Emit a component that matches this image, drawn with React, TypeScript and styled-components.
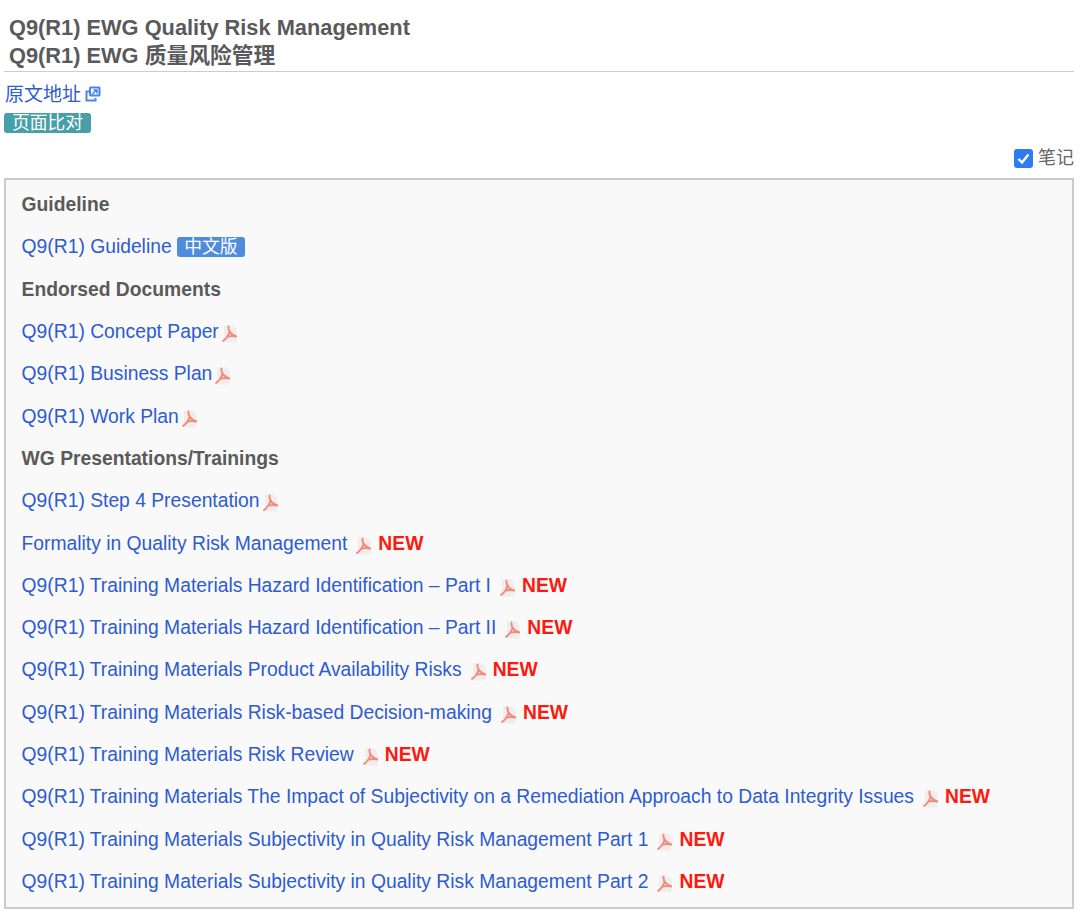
import React from 'react';
import styled, { createGlobalStyle } from 'styled-components';

const GlobalStyle = createGlobalStyle`
  html, body {
    margin: 0;
    padding: 0;
    background: #fff;
  }
  body {
    font-family: "Liberation Sans", "Noto Sans CJK SC", sans-serif;
    color: #5a5a5a;
  }
`;

const Page = styled.div`
  width: 1080px;
  height: 915px;
  overflow: hidden;
  box-sizing: border-box;
  padding: 14px 6px 0 4px;
`;

const Title = styled.h2`
  margin: 0;
  padding: 0 0 1px 5px;
  font-size: 21.8px;
  line-height: 28px;
  font-weight: bold;
  color: #5a5a5a;
  border-bottom: 1px solid #ccc;
`;

const SourceLine = styled.div`
  margin-top: 9px;
  height: 24px;
  padding-left: 1px;
  display: flex;
  align-items: center;
  gap: 4px;
`;

const SourceLink = styled.a`
  font-size: 19px;
  line-height: 24px;
  margin-top: 3px;
  color: #2d5bd3;
  text-decoration: none;
`;

const ExternalSvg = styled.svg`
  margin-top: 1px;
`;

const BadgeLine = styled.div`
  display: flex;
  margin-top: 8px;
`;

const Badge = styled.span<{ $bg: string; $pad: number }>`
  display: inline-block;
  background: ${(p) => p.$bg};
  color: #fff;
  font-size: 17.8px;
  line-height: 20px;
  height: 20px;
  padding: 0 ${(p) => p.$pad}px;
  border-radius: 3px;
`;

const NoteLine = styled.label`
  margin-top: 14px;
  height: 22px;
  display: flex;
  justify-content: flex-end;
  align-items: center;
  gap: 5px;
  font-size: 18px;
  line-height: 22px;
  color: #666;
`;

const NoteBox = styled.span`
  width: 19px;
  height: 19px;
  border-radius: 3px;
  background: #2f7bf0;
  display: flex;
  align-items: center;
  justify-content: center;
`;

const Panel = styled.div`
  margin-top: 9px;
  height: 731px;
  box-sizing: border-box;
  border: 2px solid #ccc;
  background: #f9f9f9;
  padding: 4px 16px 0 15.6px;
`;

const Row = styled.div`
  height: 42.3px;
  display: flex;
  align-items: center;
  font-size: 19.3px;
  white-space: nowrap;
`;

const Heading = styled(Row)`
  font-weight: bold;
  color: #5a5a5a;
`;

const DocLink = styled.a`
  color: #2d5bd3;
  text-decoration: none;
`;

const NewMark = styled.span`
  font-weight: bold;
  color: #fb1a0e;
  margin-left: 7px;
`;

const PdfWrap = styled.span<{ $gap: number }>`
  display: inline-flex;
  margin-left: ${(p) => p.$gap}px;
  margin-top: 4px;
`;

const ChipWrap = styled.span`
  margin-left: 5px;
  display: inline-flex;
`;

const PdfIcon = ({ gap }: { gap: number }) => (
  <PdfWrap $gap={gap}>
    <svg width="15" height="18" viewBox="0 0 15 18">
      <path d="M2 0.500h9l3.500 3.500v13.500H2z" fill="#f1edec" />
      <path
        d="M6.500 1.500c-.4 3.500 1 7.500 8 10M7.500 7c-1 3.200-3 6.500-6.500 9M5.500 11.500c3-.7 6-.7 9 0"
        fill="none"
        stroke="#f28b7c"
        strokeWidth="1.900"
        strokeLinecap="round"
      />
    </svg>
  </PdfWrap>
);

const ExternalIcon = () => (
  <ExternalSvg width="16" height="16" viewBox="0 0 16 16" fill="none" stroke="#4a86e8" strokeWidth="2">
    <path d="M4 5.500H1.500v9h9V12" />
    <rect x="5" y="1.500" width="9.500" height="8" rx="0.500" />
    <path d="M7 8.500l4.500-4.500M8.500 4h3.500v3.500" strokeWidth="1.600" />
  </ExternalSvg>
);

type Doc = { name: string; gap: number; isNew?: boolean };

const endorsed: Doc[] = [
  { name: 'Q9(R1) Concept Paper', gap: 3 },
  { name: 'Q9(R1) Business Plan', gap: 3 },
  { name: 'Q9(R1) Work Plan', gap: 3 },
];

const presentations: Doc[] = [
  { name: 'Q9(R1) Step 4 Presentation', gap: 3 },
  { name: 'Formality in Quality Risk Management', gap: 9, isNew: true },
  { name: 'Q9(R1) Training Materials Hazard Identification – Part I', gap: 9, isNew: true },
  { name: 'Q9(R1) Training Materials Hazard Identification – Part II', gap: 9, isNew: true },
  { name: 'Q9(R1) Training Materials Product Availability Risks', gap: 9, isNew: true },
  { name: 'Q9(R1) Training Materials Risk-based Decision-making', gap: 9, isNew: true },
  { name: 'Q9(R1) Training Materials Risk Review', gap: 9, isNew: true },
  { name: 'Q9(R1) Training Materials The Impact of Subjectivity on a Remediation Approach to Data Integrity Issues', gap: 9, isNew: true },
  { name: 'Q9(R1) Training Materials Subjectivity in Quality Risk Management Part 1', gap: 9, isNew: true },
  { name: 'Q9(R1) Training Materials Subjectivity in Quality Risk Management Part 2', gap: 9, isNew: true },
];

const DocRow = ({ doc }: { doc: Doc }) => (
  <Row>
    <DocLink href="#">{doc.name}</DocLink>
    <PdfIcon gap={doc.gap} />
    {doc.isNew && <NewMark>NEW</NewMark>}
  </Row>
);

export default function App() {
  return (
    <Page>
      <GlobalStyle />
      <Title>
        Q9(R1) EWG Quality Risk Management
        <br />
        Q9(R1) EWG 质量风险管理
      </Title>
      <SourceLine>
        <SourceLink href="#">原文地址</SourceLink>
        <ExternalIcon />
      </SourceLine>
      <BadgeLine>
        <Badge $bg="#479fa8" $pad={8}>页面比对</Badge>
      </BadgeLine>
      <NoteLine>
        <NoteBox>
          <svg width="13" height="13" viewBox="0 0 13 13" fill="none" stroke="#fff" strokeWidth="2.400">
            <path d="M1.500 7l3.500 3.500 6.500-8" />
          </svg>
        </NoteBox>
        笔记
      </NoteLine>
      <Panel>
        <Heading>Guideline</Heading>
        <Row>
          <DocLink href="#">Q9(R1) Guideline</DocLink>
          <ChipWrap>
            <Badge $bg="#4f8ddb" $pad={7.5}>中文版</Badge>
          </ChipWrap>
        </Row>
        <Heading>Endorsed Documents</Heading>
        {endorsed.map((d) => (
          <DocRow key={d.name} doc={d} />
        ))}
        <Heading>WG Presentations/Trainings</Heading>
        {presentations.map((d) => (
          <DocRow key={d.name} doc={d} />
        ))}
      </Panel>
    </Page>
  );
}
